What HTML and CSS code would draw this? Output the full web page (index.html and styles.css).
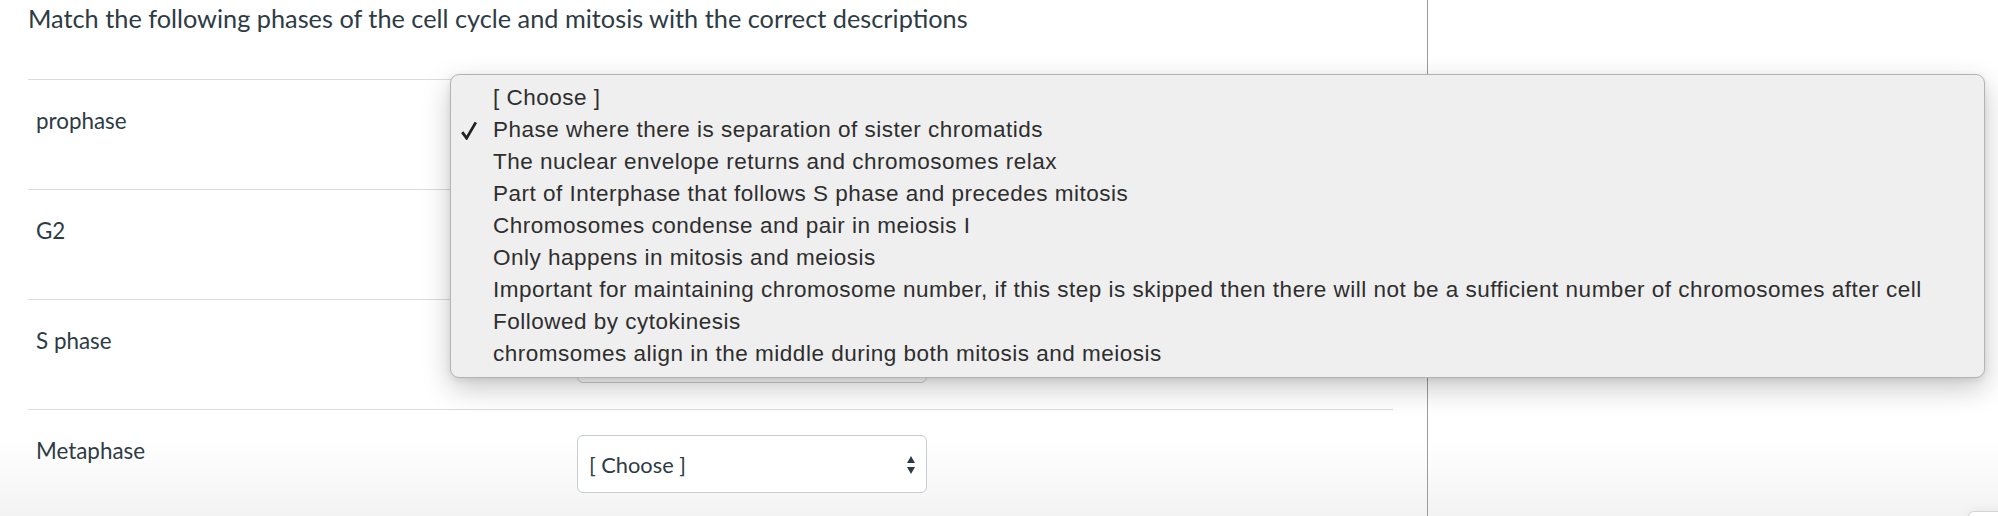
FILE: index.html
```html
<!DOCTYPE html>
<html lang="en">
<head>
<meta charset="utf-8">
<title>Matching question</title>
<link rel="stylesheet" href="styles.css">
</head>
<body>
<div class="page">
  <div class="title">Match the following phases of the cell cycle and mitosis with the correct descriptions</div>
  <div class="rows">
    <div class="row">
      <div class="label">prophase</div>
      <div class="select"><span>[ Choose ]</span><span class="arrows"><i class="up"></i><i class="down"></i></span></div>
    </div>
    <div class="row">
      <div class="label">G2</div>
      <div class="select"><span>[ Choose ]</span><span class="arrows"><i class="up"></i><i class="down"></i></span></div>
    </div>
    <div class="row">
      <div class="label">S phase</div>
      <div class="select"><span>[ Choose ]</span><span class="arrows"><i class="up"></i><i class="down"></i></span></div>
    </div>
    <div class="row">
      <div class="label">Metaphase</div>
      <div class="select"><span>[ Choose ]</span><span class="arrows"><i class="up"></i><i class="down"></i></span></div>
    </div>
  </div>
</div>

<ul class="menu">
  <li>[ Choose ]</li>
  <li class="checked"><svg class="check" width="18" height="20" viewBox="0 0 18 20"><path d="M2.2 12.2 L6.6 18.2 L15.8 2.4" fill="none" stroke="#222" stroke-width="2.8" stroke-linejoin="miter" stroke-linecap="butt"/></svg>Phase where there is separation of sister chromatids</li>
  <li>The nuclear envelope returns and chromosomes relax</li>
  <li>Part of Interphase that follows S phase and precedes mitosis</li>
  <li>Chromosomes condense and pair in meiosis I</li>
  <li>Only happens in mitosis and meiosis</li>
  <li>Important for maintaining chromosome number, if this step is skipped then there will not be a sufficient number of chromosomes after cell</li>
  <li>Followed by cytokinesis</li>
  <li>chromsomes align in the middle during both mitosis and meiosis</li>
</ul>

<div class="corner"></div>
</body>
</html>
```

FILE: styles.css
```css
html, body {
  margin: 0;
  padding: 0;
  height: 516px;
  overflow: hidden;
}

body {
  position: relative;
  font-family: Lato, "Open Sans", sans-serif;
  color: #2d3b45;
  background: linear-gradient(to bottom, #ffffff 0, #ffffff 440px, #f3f3f3 516px);
}

.page {
  box-sizing: border-box;
  width: 1428px;
  height: 516px;
  padding: 0 34px 0 28px;
  border-right: 1px solid #9c9c9c;
}

.title {
  font-size: 25.3px;
  line-height: 30px;
  padding-top: 3px;
  margin-bottom: 46px;
}

.row {
  display: flex;
  align-items: flex-start;
  height: 110px;
  box-sizing: border-box;
  border-top: 1px solid #d9dcde;
  padding: 25px 0 0 8px;
}

.label {
  width: 541px;
  flex: none;
  font-size: 22.4px;
  line-height: 24px;
  margin-top: 4px;
}

.select {
  box-sizing: border-box;
  width: 350px;
  height: 58px;
  flex: none;
  display: flex;
  align-items: center;
  justify-content: space-between;
  padding: 0 11px 0 11px;
  border: 1px solid #c7cdd1;
  border-radius: 6px;
  background: #ffffff;
  font-size: 21.8px;
}

.arrows {
  display: flex;
  flex-direction: column;
  align-items: center;
  gap: 4px;
  margin-top: 2px;
}

.arrows i {
  display: block;
  width: 0;
  height: 0;
  border-left: 4px solid transparent;
  border-right: 4px solid transparent;
}

.arrows .up {
  border-bottom: 7px solid #2d3b45;
}

.arrows .down {
  border-top: 7px solid #2d3b45;
}

.menu {
  position: absolute;
  left: 450px;
  top: 74px;
  width: 1535px;
  height: 304px;
  box-sizing: border-box;
  margin: 0;
  padding: 7px 0;
  list-style: none;
  background: #efefef;
  border: 1px solid #b3b3b3;
  border-radius: 9px;
  box-shadow: 0 10px 28px rgba(0, 0, 0, 0.22), 0 2px 6px rgba(0, 0, 0, 0.08);
  font-family: "Liberation Sans", Arial, sans-serif;
  font-size: 22.5px;
  letter-spacing: 0.5px;
  color: #2e2e2e;
}

.menu li {
  position: relative;
  height: 32px;
  line-height: 32px;
  padding-left: 42px;
  white-space: nowrap;
}

.check {
  position: absolute;
  left: 9px;
  top: 6px;
}

.corner {
  position: absolute;
  left: 1968px;
  top: 511px;
  width: 80px;
  height: 5px;
  background: #ffffff;
  border: 1px solid #d4d4d4;
  border-bottom: 0;
  border-radius: 9px 9px 0 0;
  box-shadow: 0 0 12px rgba(0, 0, 0, 0.08);
}
```
